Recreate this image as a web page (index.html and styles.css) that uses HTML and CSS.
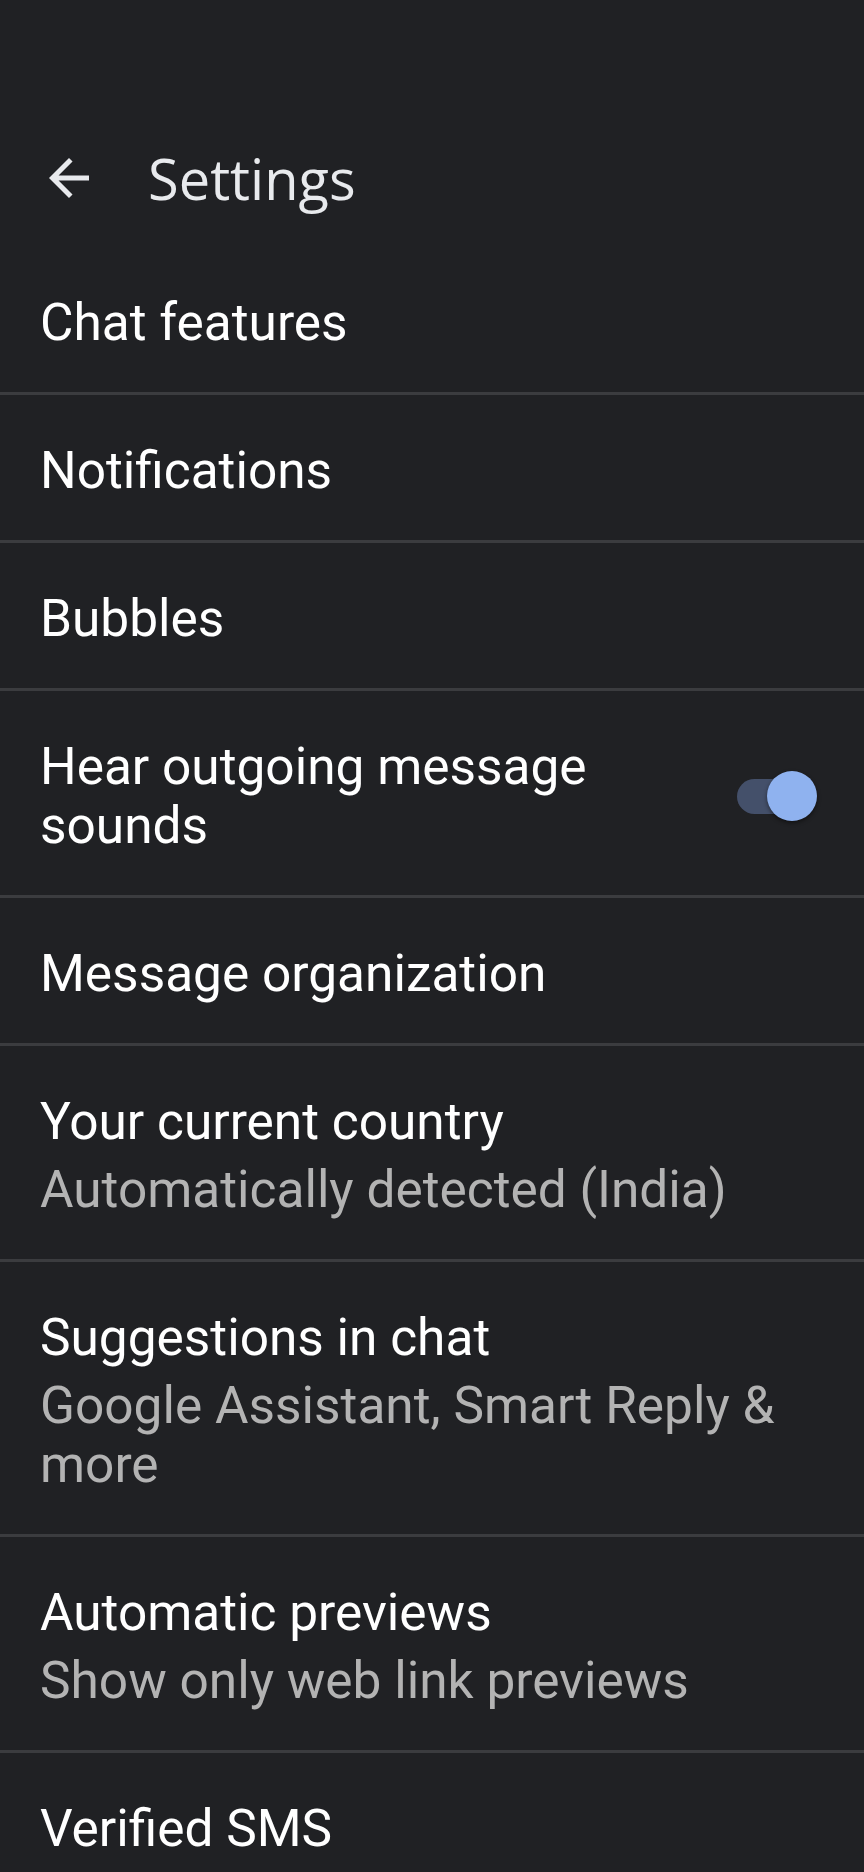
FILE: index.html
```html
<!DOCTYPE html>
<html lang="en">
<head>
    <meta charset="UTF-8">
    <meta name="viewport" content="width=device-width, initial-scale=1.0">
    <title>Settings</title>
    <link rel="stylesheet" href="styles.css">
</head>
<body>
    <div class="statusbar"></div>

    <header class="toolbar">
        <button class="back" aria-label="Back">
            <svg viewBox="0 0 24 24" width="60" height="60">
                <path d="M20 11H7.83l5.59-5.59L12 4l-8 8 8 8 1.41-1.41L7.83 13H20v-2z" fill="#e8eaed"/>
            </svg>
        </button>
        <h1>Settings</h1>
    </header>

    <ul class="prefs">
        <li class="pref">
            <div class="pref-text"><div class="pref-title">Chat features</div></div>
        </li>
        <li class="pref">
            <div class="pref-text"><div class="pref-title">Notifications</div></div>
        </li>
        <li class="pref">
            <div class="pref-text"><div class="pref-title">Bubbles</div></div>
        </li>
        <li class="pref pref-switch">
            <div class="pref-text"><div class="pref-title">Hear outgoing message sounds</div></div>
            <div class="switch on">
                <span class="track"></span>
                <span class="thumb"></span>
            </div>
        </li>
        <li class="pref">
            <div class="pref-text"><div class="pref-title">Message organization</div></div>
        </li>
        <li class="pref">
            <div class="pref-text">
                <div class="pref-title">Your current country</div>
                <div class="pref-summary">Automatically detected (India)</div>
            </div>
        </li>
        <li class="pref">
            <div class="pref-text">
                <div class="pref-title">Suggestions in chat</div>
                <div class="pref-summary">Google Assistant, Smart Reply &amp; more</div>
            </div>
        </li>
        <li class="pref">
            <div class="pref-text">
                <div class="pref-title">Automatic previews</div>
                <div class="pref-summary">Show only web link previews</div>
            </div>
        </li>
        <li class="pref">
            <div class="pref-text"><div class="pref-title">Verified SMS</div></div>
        </li>
    </ul>
</body>
</html>
```

FILE: styles.css
```css
body {
    margin: 0;
    background-color: #202124;
    color: #fff;
    font-family: Roboto, "Liberation Sans", sans-serif;
    overflow: hidden;
}
.statusbar {
    height: 108px;
}
.toolbar {
    display: flex;
    align-items: center;
    height: 139px;
}
.back {
    display: flex;
    padding: 0;
    margin-left: 39px;
    border: none;
    background: none;
}
.toolbar h1 {
    margin: 0 0 0 49px;
    font-family: "Open Sans", Roboto, sans-serif;
    font-size: 56px;
    font-weight: 400;
    color: #e8eaed;
}
.prefs {
    list-style: none;
    margin: 0;
    padding: 0;
}
.pref {
    display: flex;
    align-items: center;
    padding: 46px 40px 40px 40px;
    border-bottom: 3px solid #3b3c3f;
}
.pref:last-child {
    border-bottom: none;
}
.pref-text {
    flex: 1;
    min-width: 0;
}
.pref-title {
    font-size: 51.4px;
    line-height: 59px;
}
.pref-summary {
    margin-top: 9px;
    font-size: 51.4px;
    line-height: 59px;
    color: #b3b3b3;
}
.switch {
    position: relative;
    flex: none;
    width: 80px;
    height: 50px;
    margin-left: 36px;
    margin-right: 7px;
}
.switch .track {
    position: absolute;
    left: 0;
    top: 8px;
    width: 72px;
    height: 35px;
    border-radius: 18px;
    background-color: #44506a;
}
.switch .thumb {
    position: absolute;
    left: 30px;
    top: 0;
    width: 50px;
    height: 50px;
    border-radius: 50%;
    background-color: #8fb2ef;
    box-shadow: 0 2px 4px rgba(0, 0, 0, 0.45);
}
```
